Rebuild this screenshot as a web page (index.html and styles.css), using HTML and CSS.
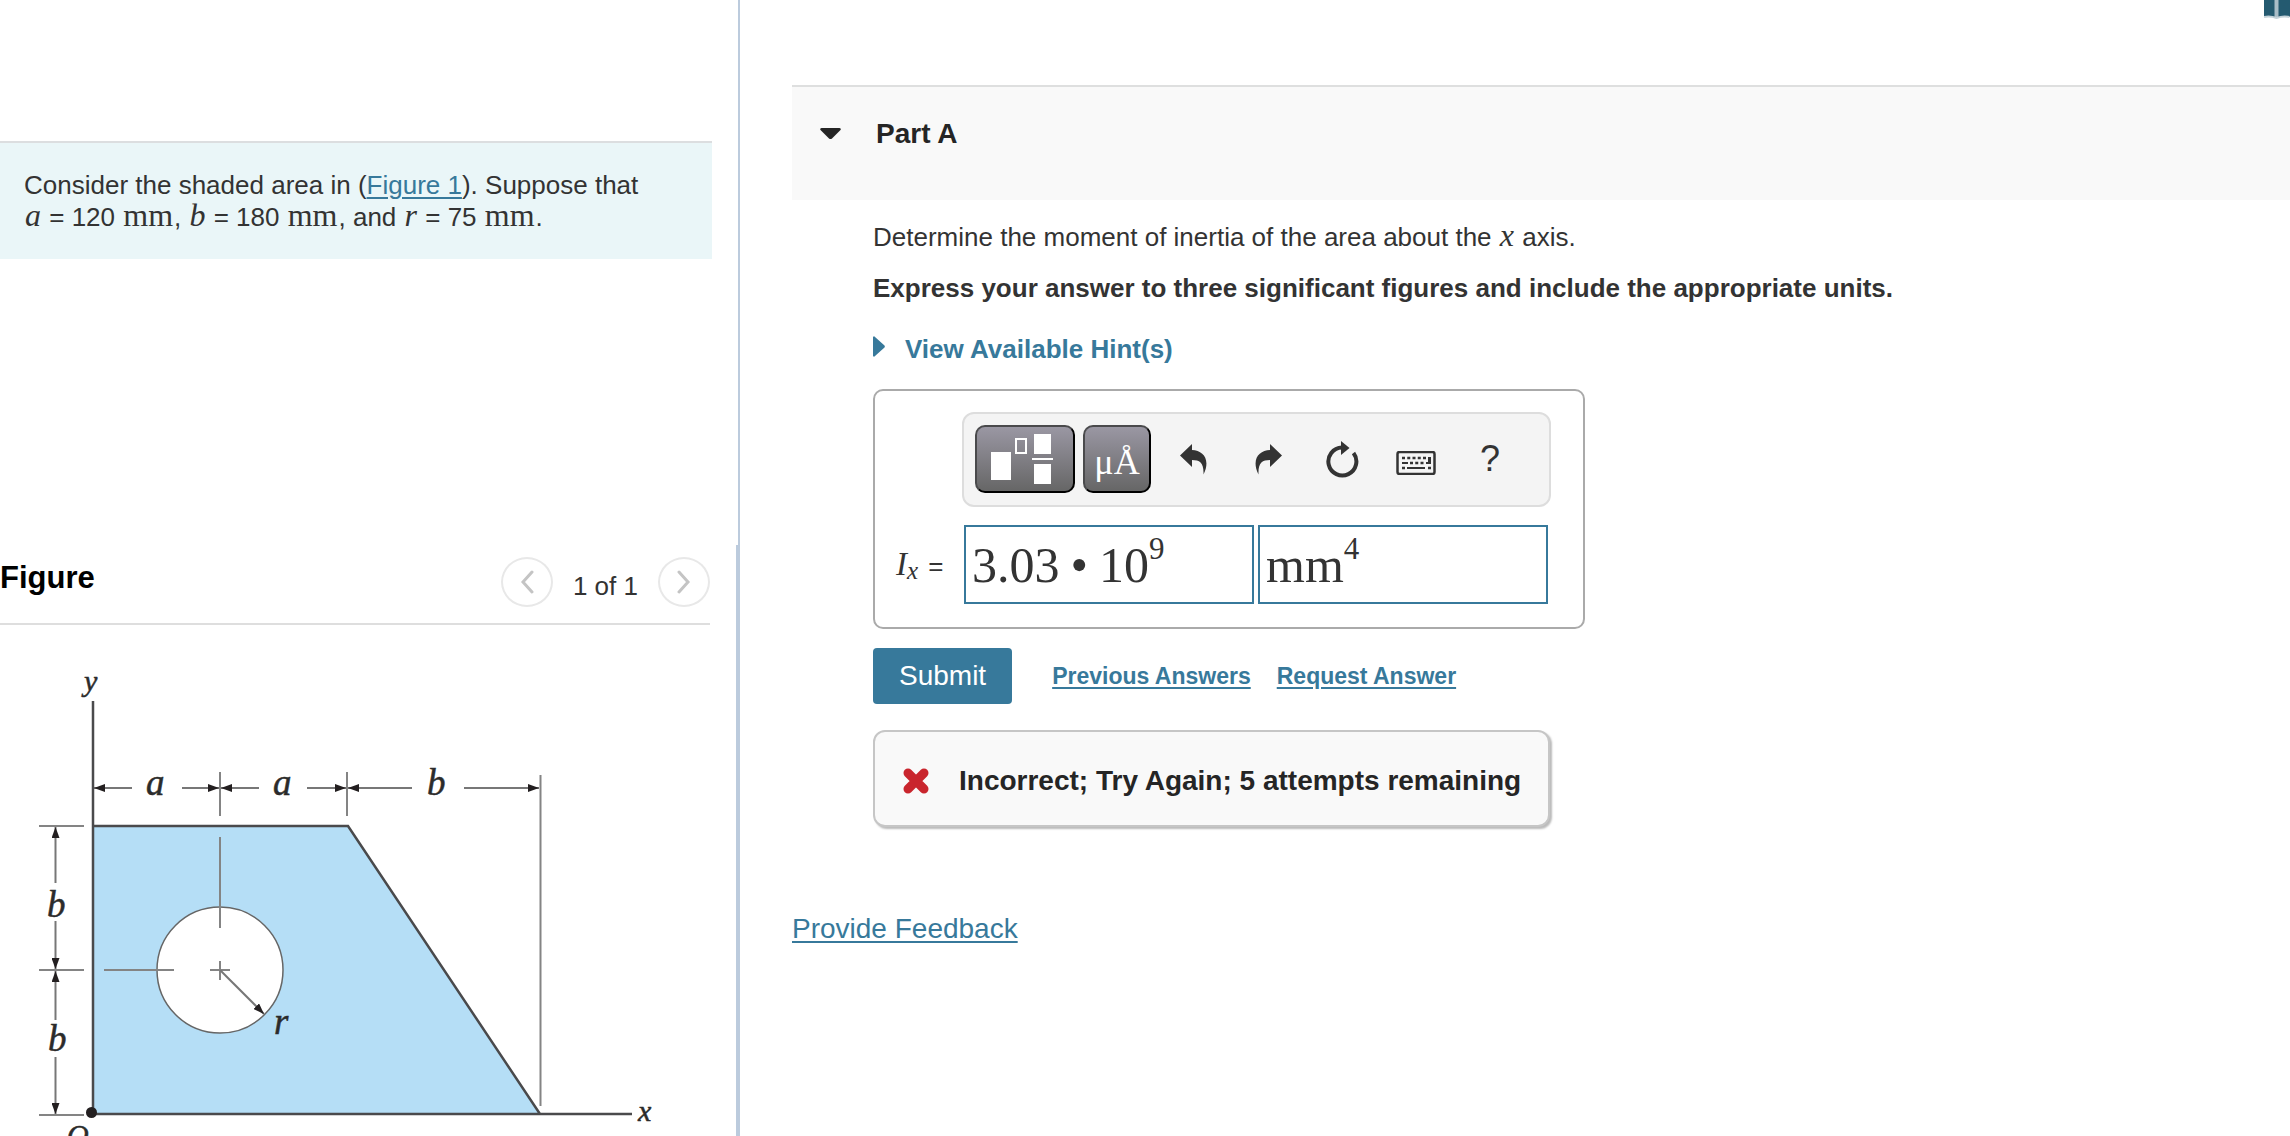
FILE: index.html
```html
<!DOCTYPE html>
<html lang="en">
<head>
<meta charset="utf-8">
<title>Part A</title>
<link rel="stylesheet" href="styles.css">
</head>
<body>
<div class="layout">
  <aside class="side">
    <section class="intro">
      <p>Consider the shaded area in (<a href="#figure">Figure 1</a>). Suppose that <br><i class="math">a</i> = 120 <span class="math">mm</span>, <i class="math">b</i> = 180 <span class="math">mm</span>, and <i class="math">r</i> = 75 <span class="math">mm</span>.</p>
    </section>
    <section class="figure" id="figure">
      <header class="figure-head">
        <h2>Figure</h2>
        <div class="pager">
          <button class="round" type="button" aria-label="Previous figure"><svg width="14" height="24" viewBox="0 0 14 24"><path d="M12 2 3 12l9 10"/></svg></button>
          <span>1 of 1</span>
          <button class="round" type="button" aria-label="Next figure"><svg width="14" height="24" viewBox="0 0 14 24"><path d="M2 2l9 10-9 10"/></svg></button>
        </div>
      </header>
      <svg class="drawing" viewBox="0 625 710 550" role="img" aria-label="Shaded area with a circular hole">
        <defs>
          <marker id="tip" viewBox="0 0 11 8" refX="11" refY="4" markerWidth="11" markerHeight="8" markerUnits="userSpaceOnUse" orient="auto-start-reverse"><path d="M0 0 11 4 0 8z" fill="#231f20"/></marker>
        </defs>
        <path d="M93 826H348L540 1114H93z" fill="#b5def6"/>
        <circle cx="220" cy="970" r="63" fill="#fff" stroke="#666" stroke-width="1.5"/>
        <g class="thin">
          <path d="M220 772v44M347 772v44M220 837v91M104 970h70M210 970h20M220 961v19M39 826h45M39 970h45M39 1115h45M540.500 775v331"/>
        </g>
        <g class="dim" marker-end="url(#tip)">
          <path d="M132 788H94"/><path d="M182 788h37"/><path d="M259 788h-38"/><path d="M307 788h39"/><path d="M412 788h-64"/><path d="M464 788h75"/>
          <path d="M55.500 883V827"/><path d="M55.500 921v48"/><path d="M55.500 1020v-49"/><path d="M55.500 1057v57"/>
          <path d="M220 970l44 44"/>
        </g>
        <path class="edge" d="M93 701v413M93 826H348L540 1114M93 1114H632"/>
        <circle cx="91.500" cy="1112.500" r="5.500" fill="#231f20"/>
        <g class="labels">
          <text x="146" y="795">a</text><text x="273" y="795">a</text><text x="427" y="795">b</text>
          <text x="47" y="917">b</text><text x="48" y="1051">b</text><text x="274" y="1034">r</text>
        </g>
        <g class="labels small">
          <text x="84" y="691">y</text><text x="638" y="1121">x</text><text x="67" y="1145">O</text>
        </g>
      </svg>
    </section>
  </aside>
  <div class="divider"><span></span></div>
  <main class="main">
    <a class="book" href="#review" aria-label="Review"><svg width="26" height="19" viewBox="0 0 26 19"><path d="M0 0h26v17H0z" fill="#245a70"/><path d="M12.500 0v18" stroke="#a9bdc7" stroke-width="4"/><path d="M0 17q6-1.500 12.500 1 6.500-2.500 13-1" fill="none" stroke="#c4d2d9" stroke-width="2"/></svg></a>
    <section class="part">
      <header class="part-head">
        <svg width="21" height="13" viewBox="0 0 21 13"><path d="M1.500 0h18q2 .5 1 2L12 10.500q-1.500 1-3 0L.5 2Q-.5.5 1.500 0z" fill="#252525"/></svg>
        <h2>Part A</h2>
      </header>
      <div class="part-body">
        <p>Determine the moment of inertia of the area about the <i class="math">x</i> axis.</p>
        <p class="express">Express your answer to three significant figures and include the appropriate units.</p>
        <button class="hints" type="button"><svg width="12" height="24" viewBox="0 -3 12 24"><path d="M0 1q1-1.500 2 0L11.500 9.500q.7 1 0 2L2 20q-1 1.500-2 0z" fill="#37799b"/></svg>View Available Hint(s)</button>
        <div class="answer">
          <div class="toolbar">
            <button class="dark wide" type="button" aria-label="Templates"><svg width="68" height="52" viewBox="0 0 68 52"><g fill="#fff"><path d="M0 19h20v28H0zM43 1h17v20H43zM43 31h17v20H43zM41 25h21v2H41z"/></g><path d="M25 6h10v14H25z" fill="none" stroke="#fff" stroke-width="2"/></svg></button>
            <button class="dark units" type="button" aria-label="Symbols">μÅ</button>
            <div class="tools">
              <button type="button" aria-label="Undo"><svg width="28" height="31" viewBox="0 0 28 31"><path d="M0 11.500 12 0v6C23 6.500 31 15 23.500 30.500 24 19 20 16 12 16v7z"/></svg></button>
              <button type="button" aria-label="Redo"><svg width="28" height="31" viewBox="0 0 28 31"><path d="M28 11.500 16 0v6C5 6.500-3 15 4.500 30.500 4 19 8 16 16 16v7z"/></svg></button>
              <button type="button" aria-label="Reset"><svg width="34" height="37" viewBox="0 0 34 37"><path d="M17 6.500A14 14 0 1 0 28.500 12" fill="none" stroke="#333" stroke-width="4"/><path d="M16 0 24.500 7 16 14z"/></svg></button>
              <button class="keys" type="button" aria-label="Keyboard shortcuts"><svg width="40" height="24" viewBox="0 0 40 24"><rect x="1.500" y="1" width="37" height="22" rx="2" fill="none" stroke="#333" stroke-width="2.500"/><path d="M6 7h24M14 12h14M6 17h3M32 17h3" fill="none" stroke="#333" stroke-width="2.500" stroke-dasharray="3 2.250"/><path d="M6 11h6v2H6zM11 16h18v2H11zM32 6h3v7h-5v-2h2z"/></svg></button>
              <button class="help" type="button" aria-label="Help">?</button>
            </div>
          </div>
          <div class="lhs" id="lhs"><i>I<sub>x</sub></i> =</div>
          <div class="fields">
            <div class="field" role="textbox" contenteditable="true" aria-labelledby="lhs">3.03<span class="dot">•</span>10<sup>9</sup></div>
            <div class="field" role="textbox" contenteditable="true" aria-label="Units">mm<sup>4</sup></div>
          </div>
        </div>
        <div class="actions">
          <button class="submit" type="button">Submit</button>
          <a href="#previous">Previous Answers</a>
          <a href="#request">Request Answer</a>
        </div>
        <div class="result" role="status">
          <svg width="28" height="28" viewBox="0 0 28 28"><path d="M6 6 22 22M22 6 6 22" stroke="#c9252d" stroke-width="9" stroke-linecap="round"/></svg>
          <strong>Incorrect; Try Again; 5 attempts remaining</strong>
        </div>
      </div>
    </section>
    <a class="feedback" href="#feedback">Provide Feedback</a>
  </main>
</div>
</body>
</html>
```
FILE: styles.css
```css
* { box-sizing: border-box; }
body {
  margin: 0;
  background: #fff;
  color: #333;
  font: 26px/32px "Liberation Sans", Arial, sans-serif;
}
h2, p { margin: 0; }
svg { display: block; flex: none; }
button { font: inherit; color: inherit; border: 0; padding: 0; background: none; }
a { color: #37799b; text-decoration-thickness: 2px; text-underline-offset: 3px; }
.math { padding: 0 1px; font: 32px/20px "Liberation Serif", "Times New Roman", serif; }
i.math { font-style: italic; }

.layout { display: flex; height: 100vh; overflow: hidden; }

.side { flex: 0 0 712px; padding-top: 141px; }
.intro { padding: 26px 24px; border-top: 2px solid #dcdee0; background: #eaf6f8; }

.figure { margin: 286px 2px 0 0; }
.figure-head {
  display: flex; justify-content: space-between; align-items: flex-start;
  padding: 12px 0 16px; border-bottom: 2px solid #dedede;
}
.figure-head h2 { color: #000; font-size: 31px; line-height: 42px; }
.pager { display: flex; align-items: center; gap: 20px; }
.pager span { padding-top: 8px; }
.round {
  display: flex; align-items: center; justify-content: center;
  width: 52px; height: 50px; border: 2px solid #e8e8e8; border-radius: 50%;
}
.round path { fill: none; stroke: #c4c4c4; stroke-width: 3; stroke-linecap: round; }
.drawing { width: 100%; }
.thin { stroke: #848484; stroke-width: 2; }
.dim { stroke: #777; stroke-width: 2; }
.edge { fill: none; stroke: #4a4a4c; stroke-width: 2.5; }
.labels { fill: #2b2b2b; stroke: #2b2b2b; stroke-width: .5; font: italic 37px "Liberation Serif", serif; }
.labels.small { font-size: 30px; }

.divider { flex: 0 0 4px; margin-left: 24px; border-right: 2px solid #bccbdd; padding-top: 545px; }
.divider span { display: block; height: 100%; background: #bccbdd; }

.main { position: relative; flex: 1; padding: 85px 0 0 52px; }
.book { position: absolute; top: 0; right: 0; }
.part-head {
  display: flex; gap: 35px; align-items: center;
  padding: 31px 28px 50px; border-top: 2px solid #dedfdf; background: #f9f9f9;
}
.part-head h2 { color: #252525; font-size: 28px; line-height: 32px; }
.part-body { padding: 21px 0 0 81px; }
.express { margin-top: 19px; font-weight: bold; }
.hints { display: flex; gap: 20px; margin-top: 29px; color: #37799b; font-weight: bold; }

.answer {
  display: grid; grid-template-columns: 87px 589px; row-gap: 18px;
  width: max-content; margin-top: 24px; padding: 21px 32px 23px 0;
  border: 2px solid #aaa; border-radius: 10px;
}
.toolbar {
  grid-column: 2; display: flex; align-items: center; gap: 8px; padding: 11px 11px 12px;
  border: 2px solid #ddd; border-radius: 12px; background: #f4f4f4;
}
.dark {
  display: flex; align-items: center; justify-content: center;
  width: 68px; height: 68px; border: 2px solid; border-color: #4a4a4c #000 #000 #4a4a4c; border-radius: 10px;
  background: linear-gradient(#9a97a3, #666); color: #fff; font: 36px/40px "Liberation Serif", serif;
}
.wide { width: 100px; }
.units { padding-top: 6px; }
.tools { display: flex; margin-left: -2px; }
.tools button { display: flex; align-items: center; justify-content: center; width: 74px; height: 68px; fill: #333; }
.tools .keys { padding-top: 8px; }
.tools .help { font-size: 36px; }
.lhs { padding-left: 21px; align-self: center; word-break: keep-all; white-space: nowrap; }
.lhs i { margin-right: 3px; font: italic 33px/32px "Liberation Serif", serif; }
.lhs sub { font-size: 25px; line-height: 0; vertical-align: -4px; }
.fields { display: flex; gap: 4px; padding: 0 3px 0 2px; }
.field {
  flex: 1; height: 79px; padding: 4px 6px; border: 2px solid #37799b;
  font: 50px/68px "Liberation Serif", serif; white-space: nowrap;
}
.field sup { font-size: 31px; line-height: 0; vertical-align: 23px; }
.dot { margin: 0 11px; }

.actions { display: flex; align-items: center; gap: 26px; margin-top: 19px; }
.actions a { font-size: 23px; font-weight: bold; }
.submit { margin-right: 14px; padding: 12px 26px; border-radius: 4px; background: #37799b; color: #fff; font-size: 28px; }
.result {
  display: flex; align-items: center; gap: 29px; width: max-content; margin-top: 26px; padding: 33px 27px 28px;
  border: 2px solid #c6c6c6; border-radius: 12px; background: #f9f9f9; box-shadow: 2px 2px 2px #bbb;
  color: #252525; font-size: 28px;
}
.feedback { display: inline-block; margin-top: 86px; font-size: 28px; }
```
